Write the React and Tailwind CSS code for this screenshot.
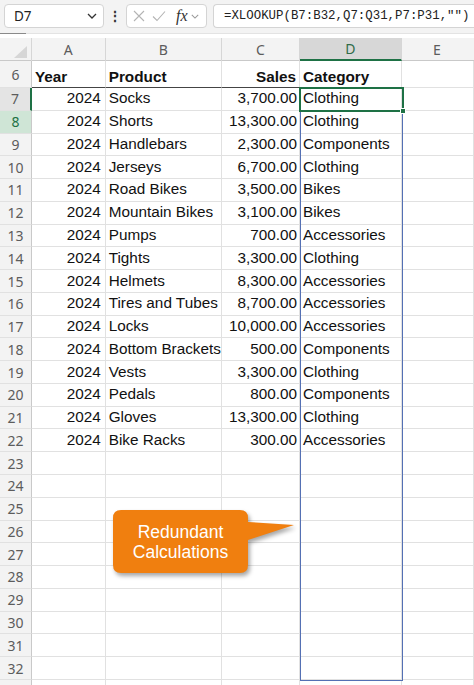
import React from 'react'

const rows = [
  ['Socks', '3,700.00', 'Clothing'],
  ['Shorts', '13,300.00', 'Clothing'],
  ['Handlebars', '2,300.00', 'Components'],
  ['Jerseys', '6,700.00', 'Clothing'],
  ['Road Bikes', '3,500.00', 'Bikes'],
  ['Mountain Bikes', '3,100.00', 'Bikes'],
  ['Pumps', '700.00', 'Accessories'],
  ['Tights', '3,300.00', 'Clothing'],
  ['Helmets', '8,300.00', 'Accessories'],
  ['Tires and Tubes', '8,700.00', 'Accessories'],
  ['Locks', '10,000.00', 'Accessories'],
  ['Bottom Brackets', '500.00', 'Components'],
  ['Vests', '3,300.00', 'Clothing'],
  ['Pedals', '800.00', 'Components'],
  ['Gloves', '13,300.00', 'Clothing'],
  ['Bike Racks', '300.00', 'Accessories'],
]

const cols = 'grid grid-cols-[32px_73.7px_116px_78.3px_102px_1fr]'
const cell = 'border-r border-b border-[#e1e1e1] flex items-center px-[3px] whitespace-nowrap overflow-hidden'
const head = 'border-r border-b border-r-[#e1e1e1] border-b-[#444] flex items-end px-[3px] pb-[1px] leading-[18px] whitespace-nowrap overflow-hidden font-bold'

function RowHead({ n }) {
  let cls = 'bg-[#f3f3f3] text-[#5c5c5c] border-r border-[#c9c9c9]'
  if (n === 7) cls = 'bg-[#e4e4e4] text-[#5c5c5c] border-r-2 border-[#1e7145]'
  if (n === 8) cls = 'bg-[#cfe5d6] text-[#1e7145] border-r border-[#c9c9c9]'
  return (
    <div className={`${cls} border-b border-b-[#e1e1e1] flex items-center justify-center text-[14px] font-['Noto_Sans',sans-serif]`}>
      {n < 33 ? n : ''}
    </div>
  )
}

function Chevron({ className }) {
  return (
    <svg viewBox="0 0 10 6" className={className} fill="none" stroke="currentColor" strokeWidth="1.3">
      <path d="M1 1l4 4 4-4" />
    </svg>
  )
}

export default function App() {
  const empty = []
  for (let n = 23; n <= 33; n++) empty.push(n)

  return (
    <div className="relative w-[474px] h-[685px] overflow-hidden bg-white font-['Liberation_Sans',Arial,sans-serif] text-[15.3px] text-[#111]">
      {/* formula bar */}
      <div className="h-[33px] bg-[#f3f3f3] flex items-start pt-[4px] pl-[4px] gap-[6px]">
        <div className="w-[100px] h-[24px] bg-white border border-[#d4d4d4] rounded-[4px] flex items-center pl-[9px] pr-[6px] font-['Noto_Sans',sans-serif] text-[13.5px] text-[#222]">
          <span className="flex-1">D7</span>
          <Chevron className="w-[10px] h-[6px] text-[#333]" />
        </div>
        <div className="w-[10px] h-[24px] flex items-center justify-center text-[#333] text-[14px] font-bold leading-none">⋮</div>
        <div className="w-[81px] h-[24px] bg-white border border-[#d4d4d4] rounded-[4px] flex items-center pl-[6px] gap-[7px]">
          <svg viewBox="0 0 12 12" className="w-[12px] h-[12px]" fill="none" stroke="#b4b4b4" strokeWidth="1.1">
            <path d="M1 1l10 10M11 1L1 11" />
          </svg>
          <svg viewBox="0 0 14 12" className="w-[14px] h-[12px]" fill="none" stroke="#b4b4b4" strokeWidth="1.1">
            <path d="M1 6.5l4 4L13 1.5" />
          </svg>
          <span className="italic font-['Liberation_Serif',serif] text-[16px] text-[#333] ml-[3px] leading-none">fx</span>
          <Chevron className="w-[8px] h-[5px] text-[#999] -ml-[4px]" />
        </div>
        <div className="flex-1 h-[24px] bg-white border border-[#d4d4d4] border-r-0 rounded-l-[4px] flex items-center pl-[10px] font-['Liberation_Mono',monospace] text-[12.4px] text-[#222] whitespace-nowrap">
          =XLOOKUP(B7:B32,Q7:Q31,P7:P31,"")
        </div>
      </div>
      <div className="h-[1px] bg-[#e3e3e3] flex">
        <div className="w-[26px] bg-[#8a8a8a]" />
      </div>
      <div className="h-[4px] bg-white" />

      {/* column headers */}
      <div className={`${cols} h-[23px] bg-[#f3f3f3] border-b border-[#c9c9c9] font-['Noto_Sans',sans-serif] text-[14px] text-[#5c5c5c]`}>
        <div className="border-r border-[#d6d6d6] relative">
          <svg viewBox="0 0 32 22" className="absolute inset-0 w-[32px] h-[22px]">
            <path d="M14 20H27V8Z" fill="#d6d6d6" />
          </svg>
        </div>
        <div className="border-r border-[#d6d6d6] flex items-center justify-center">A</div>
        <div className="border-r border-[#d6d6d6] flex items-center justify-center">B</div>
        <div className="border-r border-[#d6d6d6] flex items-center justify-center">C</div>
        <div className="bg-[#d7d7d7] border-r border-[#d6d6d6] border-b-2 border-b-[#1e7145] flex items-center justify-center text-[#2f6b48]">D</div>
        <div className="flex items-center justify-center">
          <span className="-ml-[2px]">E</span>
        </div>
      </div>

      {/* header row 6 */}
      <div className={`${cols} h-[27px]`}>
        <RowHead n={6} />
        <div className={head}>Year</div>
        <div className={head}>Product</div>
        <div className={`${head} justify-end`}>Sales</div>
        <div className={head}>Category</div>
        <div className={cell} />
      </div>

      {rows.map((r, i) => (
        <div key={i} className={`${cols} h-[22.77px]`}>
          <RowHead n={i + 7} />
          <div className={`${cell} justify-end pr-[4px]`}>2024</div>
          <div className={cell}>{r[0]}</div>
          <div className={`${cell} justify-end pr-[2px]`}>{r[1]}</div>
          <div className={cell}>{r[2]}</div>
          <div className={cell} />
        </div>
      ))}

      {empty.map((n) => (
        <div key={n} className={`${cols} h-[22.77px]`}>
          <RowHead n={n} />
          <div className={cell} />
          <div className={cell} />
          <div className={cell} />
          <div className={cell} />
          <div className={cell} />
        </div>
      ))}

      {/* spill range outline */}
      <div className="absolute left-[300px] top-[88px] w-[103px] h-[593px] border-[1.5px] border-[#5470b4] pointer-events-none" />
      {/* active cell */}
      <div className="absolute left-[299px] top-[87px] w-[105px] h-[24.5px] border-2 border-[#1e7145] pointer-events-none">
        <div className="absolute -right-[4px] -bottom-[4px] w-[6px] h-[6px] bg-[#1e7145] border border-white" />
      </div>

      {/* callout */}
      <div className="absolute left-[113px] top-[510px] w-[184px] h-[66px]">
        <svg viewBox="0 0 184 66" className="absolute inset-0 w-[184px] h-[66px] drop-shadow-[2px_3px_2px_rgba(0,0,0,0.35)]">
          <path d="M8 0H127Q135 0 135 8V12L181 15L135 30V55Q135 63 127 63H8Q0 63 0 55V8Q0 0 8 0Z" fill="#f07f0f" />
        </svg>
        <div className="relative w-[135px] h-[63px] flex flex-col items-center justify-center text-white text-[17.5px] leading-[20px]">
          <span>Redundant</span>
          <span>Calculations</span>
        </div>
      </div>
    </div>
  )
}
